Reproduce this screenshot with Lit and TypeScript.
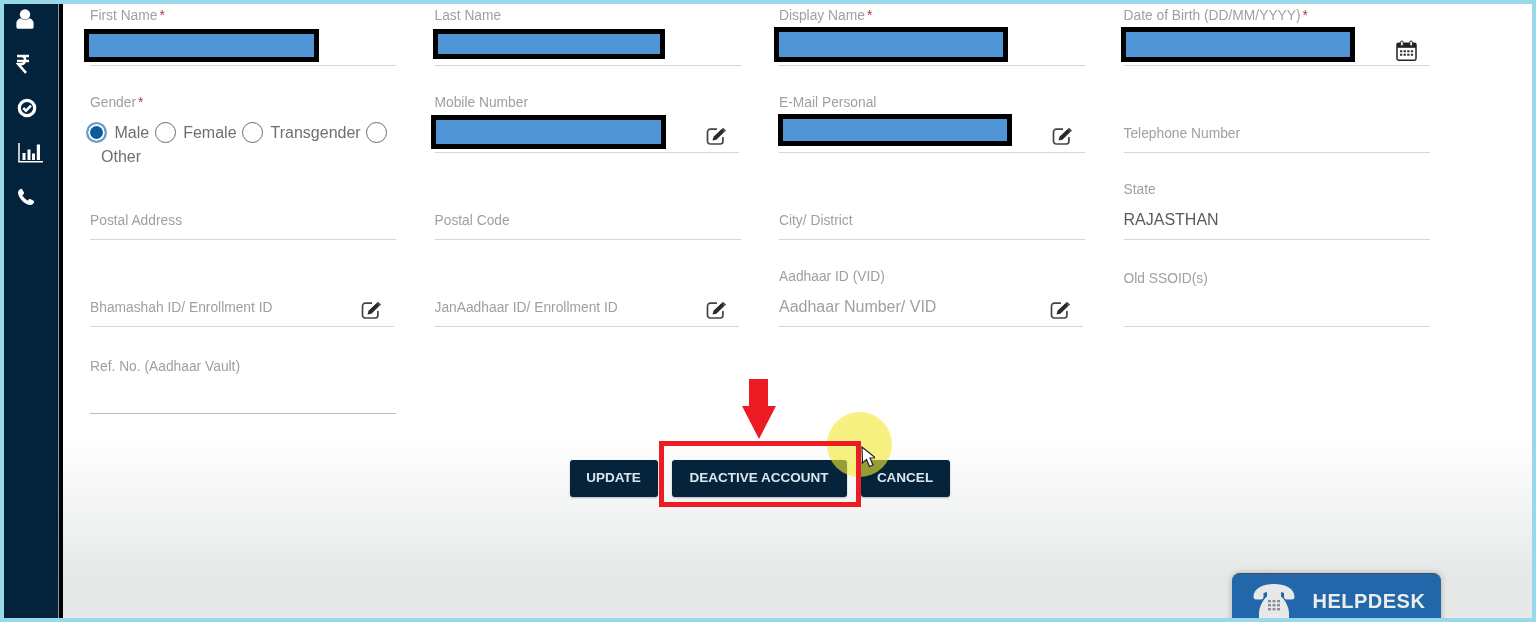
import { LitElement, html, css, svg, nothing } from "lit";
import { customElement } from "lit/decorators.js";

type Field = {
  label: string;
  req?: boolean;
  kind: "top" | "float" | "old" | "ref" | "withval" | "plain";
  value?: string;
  hint?: boolean;
  icon?: "edit" | "cal";
  short?: boolean;
  mask?: [number, number, number, number];
  gender?: boolean;
};

const FIELDS: Field[] = [
  { label: "First Name", req: true, kind: "top", mask: [-6, 3.5, 235, 33] },
  { label: "Last Name", kind: "top", mask: [-2, 6, 232, 30] },
  { label: "Display Name", req: true, kind: "top", mask: [-5, 3, 234, 35] },
  { label: "Date of Birth (DD/MM/YYYY)", req: true, kind: "top", icon: "cal", mask: [-3, 3, 234, 35] },
  { label: "Gender", req: true, kind: "plain", gender: true },
  { label: "Mobile Number", kind: "top", icon: "edit", short: true, mask: [-4, 3, 235, 34] },
  { label: "E-Mail Personal", kind: "top", icon: "edit", mask: [-1, 6, 234, 32] },
  { label: "Telephone Number", kind: "float" },
  { label: "Postal Address", kind: "float" },
  { label: "Postal Code", kind: "float" },
  { label: "City/ District", kind: "float" },
  { label: "State", kind: "withval", value: "RAJASTHAN" },
  { label: "Bhamashah ID/ Enrollment ID", kind: "float", icon: "edit", short: true },
  { label: "JanAadhaar ID/ Enrollment ID", kind: "float", icon: "edit", short: true },
  { label: "Aadhaar ID (VID)", kind: "withval", value: "Aadhaar Number/ VID", hint: true, icon: "edit", short: true },
  { label: "Old SSOID(s)", kind: "old" },
  { label: "Ref. No. (Aadhaar Vault)", kind: "ref" },
];

const editIcon = svg`<svg class="fi" viewBox="0 0 21 19" width="21" height="19" aria-hidden="true">
  <path d="M11 2.200H4.200A2.700 2.700 0 0 0 1.500 4.900v9.400a2.700 2.700 0 0 0 2.700 2.700h10a2.700 2.700 0 0 0 2.700-2.700V10" fill="none" stroke="#444" stroke-width="1.700"/>
  <path d="M6.500 13.600l1-3.800 8.400-8 2.900 2.800-8.400 8.100z" fill="#2a2a2a"/>
  <path d="M17 .8l3 2.900-.9.900-3-2.900z" fill="#2a2a2a"/>
</svg>`;

const calIcon = svg`<svg class="fi cal" viewBox="0 0 21 21" width="21" height="21" aria-hidden="true">
  <rect x="1" y="3.200" width="19" height="17" rx="1.600" fill="#fff" stroke="#222" stroke-width="1.500"/>
  <rect x="1" y="3.200" width="19" height="4.600" fill="#222"/>
  <rect x="4.600" y="1" width="2.600" height="5" rx="1.200" fill="#fff" stroke="#222" stroke-width="1"/>
  <rect x="13.800" y="1" width="2.600" height="5" rx="1.200" fill="#fff" stroke="#222" stroke-width="1"/>
  <path d="M4 10.200h2.300v2H4zM7.600 10.200h2.300v2H7.600zM11.200 10.200h2.300v2h-2.300zM14.800 10.200h2.300v2h-2.300zM4 13.800h2.300v2H4zM7.600 13.800h2.300v2H7.600zM11.200 13.800h2.300v2h-2.300zM14.800 13.800h2.300v2h-2.300z" fill="#333"/>
</svg>`;

const navIcons = [
  svg`<svg viewBox="0 0 18 20" width="18" height="20"><circle cx="9" cy="5.400" r="5.200" fill="#fff"/><path d="M.4 18V14.400C.4 11.400 3 9.300 5 9.300c1 1 2.400 1.500 4 1.500s3-.5 4-1.500c2 0 4.600 2.100 4.600 5.100V18c0 1-.8 1.800-1.800 1.800H2.200C1.200 19.800.4 19 .4 18z" fill="#fff"/></svg>`,
  svg`<svg viewBox="0 0 14 20" width="14" height="20"><path d="M1 2h12M1 7h12M2 2h3.400c5 0 5 8-.4 8.300H2.400L10 18.800" fill="none" stroke="#fff" stroke-width="2.500"/></svg>`,
  svg`<svg viewBox="0 0 20 20" width="20" height="20"><circle cx="10" cy="10" r="7.700" fill="none" stroke="#fff" stroke-width="3.200"/><path d="M6.200 10l2.800 2.700 5-5" fill="none" stroke="#fff" stroke-width="2.500"/></svg>`,
  svg`<svg viewBox="0 0 25 20" width="25" height="20"><path d="M1 0v18.800h24" fill="none" stroke="#fff" stroke-width="1.500"/><path d="M4.500 10h3v7h-3zM9.500 6.500h3V17h-3zM14 10.500h3V17h-3zM18.800 1.500h3.200V17h-3.200z" fill="#fff"/></svg>`,
  svg`<svg viewBox="0 0 18 18" width="18" height="18"><path d="M1 4.500C1 3 3 .8 4.300.8c.5 0 .8.300 1 .7l1.700 3.300c.2.500 0 .9-.3 1.200L5.300 7.300c1 2 3.300 4.300 5.400 5.400l1.300-1.400c.3-.3.800-.5 1.200-.3l3.300 1.700c.4.200.7.500.7 1 0 1.300-2.200 3.300-3.700 3.300C8 17 1 10 1 4.500z" fill="#fff"/></svg>`,
];

@customElement("app-root")
export class AppRoot extends LitElement {
  static styles = css`
    :host { display: block; width: 1536px; height: 622px; overflow: hidden; font-family: "Liberation Sans", Arial, sans-serif; }
    .frame { box-sizing: border-box; width: 1536px; height: 622px; border: 4px solid #97d8ea; display: flex; overflow: hidden; background: #fff; }
    .side { width: 54px; flex: none; background: #03233c; border-right: 1px solid #7f99a8; display: flex; flex-direction: column; align-items: center; filter: blur(.4px); }
    .nav { height: 44.500px; width: 44px; flex: none; display: flex; align-items: center; justify-content: center; }
    .nav:nth-child(1) { margin: -7px 0 0 -12px; }
    .nav:nth-child(2) { margin-left: -16px; }
    .nav:nth-child(3) { margin-left: -8px; }
    .nav:nth-child(4) { margin-left: -2px; }
    .nav:nth-child(5) { margin-left: -10px; }
    .strip { width: 4px; flex: none; background: #000; }
    .main { flex: 1; min-width: 0; position: relative; overflow: hidden; background: linear-gradient(#fff 0, #fff 430px, #f2f3f3 510px, #e7e9e9 570px); filter: blur(.45px); }
    .grid { display: grid; grid-template-columns: repeat(4, 306px); column-gap: 38.500px; grid-template-rows: 62px repeat(4, 87px); padding-left: 27px; }
    .field { position: relative; display: flex; flex-direction: column; justify-content: flex-end; border-bottom: 1.500px solid #d6d6d6; box-sizing: border-box; }
    .field.short { margin-right: 2px; }
    .field.gender { border-bottom-color: transparent; justify-content: flex-start; padding-top: 30px; }
    .field.last { border-bottom-color: #bdbdbd; }
    .label { font-size: 13.800px; line-height: 14px; color: #a0a0a0; white-space: nowrap; }
    .label i { font-style: normal; color: #b5343c; margin-left: 2px; }
    .label.top { margin-bottom: 42px; }
    .label.float { margin-bottom: 11px; }
    .label.old { margin-bottom: 40px; }
    .label.ref { margin-bottom: 39px; }
    .label.withval { margin-bottom: 13px; }
    .val { font-size: 16px; line-height: 20px; margin-bottom: 9px; }
    .val.filled { color: #5a5a5a; }
    .val.hint { color: #a0a0a0; }
    .mask { position: absolute; box-sizing: border-box; border: 5px solid #000; background: #4f94d4; }
    .fi { position: absolute; right: 12px; bottom: 6px; }
    .fi.cal { right: 13px; bottom: 4px; }
    .radios { font-size: 16px; line-height: 24px; color: #6f6f6f; margin: 11px 0 0 -4px; padding-left: 15px; text-indent: -15px; width: 295px; }
    .radio { display: inline-block; box-sizing: border-box; width: 21px; height: 21px; border-radius: 50%; border: 1.500px solid #5f6f7c; background: #fff; vertical-align: -5px; text-indent: 0; }
    .radio.on { border: 2px solid #6d9cc6; box-shadow: inset 0 0 0 2px #fff; background: #0f5a9c; }
    .opt { margin: 0 5.500px 0 7.500px; }
    .actions { display: flex; gap: 14px; padding: 46px 0 0 506.500px; }
    .btn { all: unset; box-sizing: border-box; height: 37px; padding-bottom: 2px; display: flex; align-items: center; justify-content: center; background: #05243c; color: #d9e6ee; border-radius: 3px; font: bold 13.500px "Liberation Sans", Arial, sans-serif; box-shadow: 0 1px 2px rgba(0,0,0,.25); }
    .b1 { width: 88px; } .b2 { width: 175px; } .b3 { width: 89px; }
    .helpdesk { position: absolute; left: 1168.500px; top: 569px; width: 209px; height: 60px; border-radius: 8px; background: #2167a9; box-shadow: 0 0 6px rgba(0,0,0,.25); border-top: 1px solid #3d4f60; box-sizing: border-box; display: flex; gap: 18px; padding: 9px 0 0 21px; color: #eceded; font-weight: bold; font-size: 20px; line-height: 36px; letter-spacing: .5px; }
    .overlay { position: absolute; pointer-events: none; }
    .halo { left: 764px; top: 408px; width: 65px; height: 65px; border-radius: 50%; background: rgba(240,232,50,.62); }
    .box { left: 596px; top: 437px; width: 202px; height: 66px; box-sizing: border-box; border: 5px solid #ed1c24; }
    .arrow { left: 678px; top: 375px; }
    .cursor { left: 798px; top: 442px; }
  `;

  private field(f: Field) {
    const cls = ["field", f.short ? "short" : "", f.gender ? "gender" : "", f.kind === "ref" ? "last" : ""].join(" ");
    return html`<div class=${cls}>
      <div class="label ${f.kind}">${f.label}${f.req ? html`<i>*</i>` : nothing}</div>
      ${f.value ? html`<div class="val ${f.hint ? "hint" : "filled"}">${f.value}</div>` : nothing}
      ${f.gender
        ? html`<div class="radios"><span class="radio on"></span><span class="opt">Male</span><span class="radio"></span><span class="opt">Female</span><span class="radio"></span><span class="opt">Transgender</span><span class="radio"></span> <span>Other</span></div>`
        : nothing}
      ${f.icon === "edit" ? editIcon : nothing}
      ${f.icon === "cal" ? calIcon : nothing}
      ${f.mask
        ? html`<div class="mask" style="left:${f.mask[0]}px;bottom:${f.mask[1]}px;width:${f.mask[2]}px;height:${f.mask[3]}px"></div>`
        : nothing}
    </div>`;
  }

  render() {
    return html`<div class="frame">
      <nav class="side">${navIcons.map((i) => html`<div class="nav">${i}</div>`)}</nav>
      <div class="strip"></div>
      <main class="main">
        <div class="grid">${FIELDS.map((f) => this.field(f))}</div>
        <div class="actions">
          <button class="btn b1">UPDATE</button>
          <button class="btn b2">DEACTIVE ACCOUNT</button>
          <button class="btn b3">CANCEL</button>
        </div>
        <div class="helpdesk">
          <svg viewBox="0 0 42 36" width="42" height="36" aria-hidden="true">
            <path d="M.5 14C.5 5 10 1 21 1s20.500 4 20.500 13c0 1.500-1 2.500-2.500 2.500h-5.500c-1.500 0-2.500-1-2.500-2.500V10C28 9 25 8.500 21 8.500S14 9 10.500 10v4c0 1.500-1 2.500-2.500 2.500H3c-1.500 0-2.500-1-2.500-2.500z" fill="#e8e8e8"/>
            <path d="M14 7h14v6.500c4 3 8 11 8 16.500V37H6v-7c0-5.500 4-13.500 8-16.500z" fill="#e8e8e8"/>
            <g fill="#8a8f94"><rect x="15" y="17" width="3" height="2.400"/><rect x="19.500" y="17" width="3" height="2.400"/><rect x="24" y="17" width="3" height="2.400"/><rect x="15" y="21" width="3" height="2.400"/><rect x="19.500" y="21" width="3" height="2.400"/><rect x="24" y="21" width="3" height="2.400"/><rect x="15" y="25" width="3" height="2.400"/><rect x="19.500" y="25" width="3" height="2.400"/><rect x="24" y="25" width="3" height="2.400"/></g>
          </svg>
          <span>HELPDESK</span>
        </div>
        <div class="overlay halo"></div>
        <div class="overlay box"></div>
        <svg class="overlay arrow" viewBox="0 0 36 60" width="36" height="60" aria-hidden="true"><path d="M8 0h19v27h8L18 60 1 27h7z" fill="#ed1c24"/></svg>
        <svg class="overlay cursor" viewBox="0 0 14 24" width="14" height="24" aria-hidden="true"><path d="M1 1l.5 16 4-3.500 3 7 3.500-1.500-3-7h5.500z" fill="#fff" stroke="#222" stroke-width="1.200"/></svg>
      </main>
    </div>`;
  }
}
